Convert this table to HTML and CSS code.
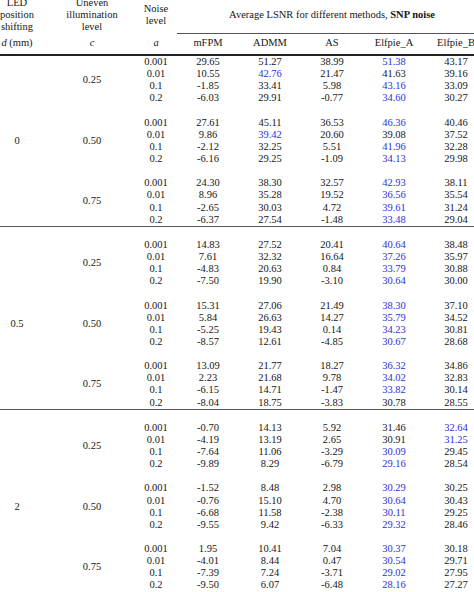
FILE: index.html
```html
<!DOCTYPE html>
<html>
<head>
<meta charset="utf-8">
<link rel="stylesheet" href="styles.css">
</head>
<body>
<table class="t">
<colgroup><col class="c-d"><col class="c-c"><col class="c-a"><col class="c-m" span="5"></colgroup>
<thead>
<tr class="h1"><th>LED<br>position<br>shifting</th><th>Uneven<br>illumination<br>level</th><th>Noise<br>level</th><th colspan="5" class="avg">Average LSNR for different methods, <b>SNP noise</b></th></tr>
<tr class="h2"><th><i>d</i> (mm)</th><th><i>c</i></th><th><i>a</i></th><th>mFPM</th><th>ADMM</th><th>AS</th><th>Elfpie_A</th><th>Elfpie_B</th></tr>
</thead>
<tbody class="sec">
<tr><td rowspan="14">0</td><td rowspan="4">0.25</td><td>0.001</td><td>29.65</td><td>51.27</td><td>38.99</td><td class="b">51.38</td><td>43.17</td></tr>
<tr><td>0.01</td><td>10.55</td><td class="b">42.76</td><td>21.47</td><td>41.63</td><td>39.16</td></tr>
<tr><td>0.1</td><td>-1.85</td><td>33.41</td><td>5.98</td><td class="b">43.16</td><td>33.09</td></tr>
<tr><td>0.2</td><td>-6.03</td><td>29.91</td><td>-0.77</td><td class="b">34.60</td><td>30.27</td></tr>
<tr class="gap"><td colspan="7"></td></tr>
<tr><td rowspan="4">0.50</td><td>0.001</td><td>27.61</td><td>45.11</td><td>36.53</td><td class="b">46.36</td><td>40.46</td></tr>
<tr><td>0.01</td><td>9.86</td><td class="b">39.42</td><td>20.60</td><td>39.08</td><td>37.52</td></tr>
<tr><td>0.1</td><td>-2.12</td><td>32.25</td><td>5.51</td><td class="b">41.96</td><td>32.28</td></tr>
<tr><td>0.2</td><td>-6.16</td><td>29.25</td><td>-1.09</td><td class="b">34.13</td><td>29.98</td></tr>
<tr class="gap"><td colspan="7"></td></tr>
<tr><td rowspan="4">0.75</td><td>0.001</td><td>24.30</td><td>38.30</td><td>32.57</td><td class="b">42.93</td><td>38.11</td></tr>
<tr><td>0.01</td><td>8.96</td><td>35.28</td><td>19.52</td><td class="b">36.56</td><td>35.54</td></tr>
<tr><td>0.1</td><td>-2.65</td><td>30.03</td><td>4.72</td><td class="b">39.61</td><td>31.24</td></tr>
<tr><td>0.2</td><td>-6.37</td><td>27.54</td><td>-1.48</td><td class="b">33.48</td><td>29.04</td></tr>
</tbody>
<tbody class="sec">
<tr class="gap"><td colspan="8"></td></tr>
<tr><td rowspan="14">0.5</td><td rowspan="4">0.25</td><td>0.001</td><td>14.83</td><td>27.52</td><td>20.41</td><td class="b">40.64</td><td>38.48</td></tr>
<tr><td>0.01</td><td>7.61</td><td>32.32</td><td>16.64</td><td class="b">37.26</td><td>35.97</td></tr>
<tr><td>0.1</td><td>-4.83</td><td>20.63</td><td>0.84</td><td class="b">33.79</td><td>30.88</td></tr>
<tr><td>0.2</td><td>-7.50</td><td>19.90</td><td>-3.10</td><td class="b">30.64</td><td>30.00</td></tr>
<tr class="gap"><td colspan="7"></td></tr>
<tr><td rowspan="4">0.50</td><td>0.001</td><td>15.31</td><td>27.06</td><td>21.49</td><td class="b">38.30</td><td>37.10</td></tr>
<tr><td>0.01</td><td>5.84</td><td>26.63</td><td>14.27</td><td class="b">35.79</td><td>34.52</td></tr>
<tr><td>0.1</td><td>-5.25</td><td>19.43</td><td>0.14</td><td class="b">34.23</td><td>30.81</td></tr>
<tr><td>0.2</td><td>-8.57</td><td>12.61</td><td>-4.85</td><td class="b">30.67</td><td>28.68</td></tr>
<tr class="gap"><td colspan="7"></td></tr>
<tr><td rowspan="4">0.75</td><td>0.001</td><td>13.09</td><td>21.77</td><td>18.27</td><td class="b">36.32</td><td>34.86</td></tr>
<tr><td>0.01</td><td>2.23</td><td>21.68</td><td>9.78</td><td class="b">34.02</td><td>32.83</td></tr>
<tr><td>0.1</td><td>-6.15</td><td>14.71</td><td>-1.47</td><td class="b">33.82</td><td>30.14</td></tr>
<tr><td>0.2</td><td>-8.04</td><td>18.75</td><td>-3.83</td><td>30.78</td><td>28.55</td></tr>
</tbody>
<tbody class="sec">
<tr class="gap"><td colspan="8"></td></tr>
<tr><td rowspan="14">2</td><td rowspan="4">0.25</td><td>0.001</td><td>-0.70</td><td>14.13</td><td>5.92</td><td>31.46</td><td class="b">32.64</td></tr>
<tr><td>0.01</td><td>-4.19</td><td>13.19</td><td>2.65</td><td>30.91</td><td class="b">31.25</td></tr>
<tr><td>0.1</td><td>-7.64</td><td>11.06</td><td>-3.29</td><td class="b">30.09</td><td>29.45</td></tr>
<tr><td>0.2</td><td>-9.89</td><td>8.29</td><td>-6.79</td><td class="b">29.16</td><td>28.54</td></tr>
<tr class="gap"><td colspan="7"></td></tr>
<tr><td rowspan="4">0.50</td><td>0.001</td><td>-1.52</td><td>8.48</td><td>2.98</td><td class="b">30.29</td><td>30.25</td></tr>
<tr><td>0.01</td><td>-0.76</td><td>15.10</td><td>4.70</td><td class="b">30.64</td><td>30.43</td></tr>
<tr><td>0.1</td><td>-6.68</td><td>11.58</td><td>-2.38</td><td class="b">30.11</td><td>29.25</td></tr>
<tr><td>0.2</td><td>-9.55</td><td>9.42</td><td>-6.33</td><td class="b">29.32</td><td>28.46</td></tr>
<tr class="gap"><td colspan="7"></td></tr>
<tr><td rowspan="4">0.75</td><td>0.001</td><td>1.95</td><td>10.41</td><td>7.04</td><td class="b">30.37</td><td>30.18</td></tr>
<tr><td>0.01</td><td>-4.01</td><td>8.44</td><td>0.47</td><td class="b">30.54</td><td>29.71</td></tr>
<tr><td>0.1</td><td>-7.39</td><td>7.24</td><td>-3.71</td><td class="b">29.02</td><td>27.95</td></tr>
<tr><td>0.2</td><td>-9.50</td><td>6.07</td><td>-6.48</td><td class="b">28.16</td><td>27.27</td></tr>
</tbody>
</table>
</body>
</html>
```
FILE: styles.css
```css
html, body {
  margin: 0;
  padding: 0;
  overflow: hidden;
  background: #ffffff;
}
body {
  font-family: "Liberation Serif", "Times New Roman", serif;
  font-size: 10.5px;
  color: #161616;
}
.t {
  border-collapse: collapse;
  table-layout: fixed;
  width: 502px;
  margin-left: -15px;
  margin-top: -3px;
}
.c-d { width: 64px; }
.c-c { width: 86px; }
.c-a { width: 42px; }
.c-m { width: 62px; }
th, td {
  padding: 0;
  text-align: center;
  vertical-align: middle;
  font-weight: normal;
  line-height: 12.13px;
  white-space: nowrap;
}
th b { font-weight: bold; }
.avg { border-bottom: 1px solid #555555; }
.h2 th { padding: 3.5px 0 4.5px; }
thead { border-bottom: 2px solid #222222; }
td { height: 12.13px; }
.sec + .sec { border-top: 1.5px solid #555555; }
.b { color: #2f2fd8; }
```
